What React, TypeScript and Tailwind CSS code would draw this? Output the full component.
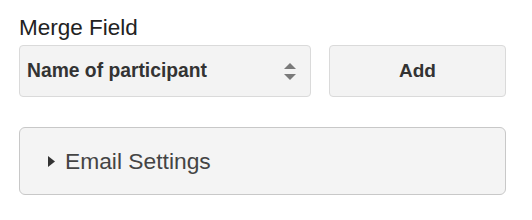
import React from "react";

export default function App() {
  return (
    <div className="w-[532px] h-[220px] bg-white pt-[15px] pl-[19px] font-['Liberation_Sans',Arial,sans-serif]">
      <div className="text-[22.5px] leading-[26px] text-[#222]">Merge Field</div>
      <div className="mt-[4px] flex gap-[18px] w-[487px]">
        <div className="w-[292px] h-[52px] rounded-[4px] border border-[#dadada] bg-[#f3f3f3] flex items-center justify-between pl-[7px] pr-[14px]">
          <span className="text-[19.3px] font-bold text-[#333]">Name of participant</span>
          <svg width="12" height="17" viewBox="0 0 12 17">
            <polygon points="6,0 12,6 0,6" fill="#7a7a7a" />
            <polygon points="0,11 12,11 6,17" fill="#7a7a7a" />
          </svg>
        </div>
        <div className="w-[177px] h-[52px] rounded-[4px] border border-[#dadada] bg-[#f3f3f3] flex items-center justify-center">
          <span className="text-[19px] font-bold text-[#333]">Add</span>
        </div>
      </div>
      <div className="mt-[30px] w-[487px] h-[68px] rounded-[6px] border border-[#c8c8c8] bg-[#f4f4f4] flex items-center pl-[28px]">
        <svg width="7" height="11" viewBox="0 0 7 11" className="mr-[10px]">
          <polygon points="0,0 7,5.5 0,11" fill="#333" />
        </svg>
        <span className="text-[22.8px] text-[#444]">Email Settings</span>
      </div>
    </div>
  );
}
